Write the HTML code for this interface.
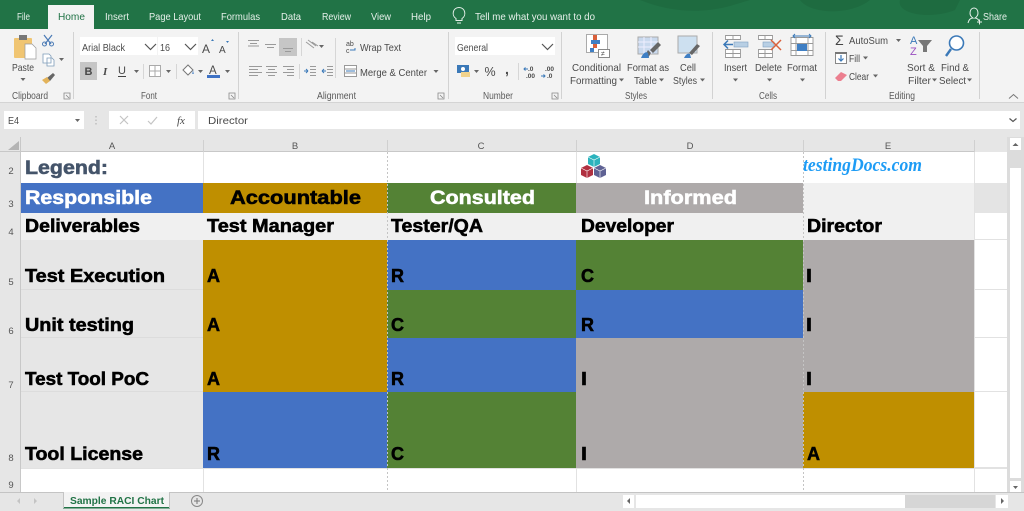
<!DOCTYPE html>
<html><head><meta charset="utf-8"><title>Sample RACI Chart</title>
<style>
html,body{margin:0;padding:0;background:#fff;width:1024px;height:511px;overflow:hidden}
svg{display:block;filter:blur(.35px)}
text{font-family:"Liberation Sans",sans-serif;font-size:10.5px;fill:#4a4a4a}
.t{fill:#e6f0ea;font-size:10.5px}
.g{fill:#5a5a5a;font-size:10px}
.b{font-weight:bold;font-size:18px;fill:#000;stroke:#000;stroke-width:.55px}
.h{font-size:19px}
.w{fill:#fff;stroke:#fff}
.r{fill:#555;font-size:9.5px;text-anchor:middle}
.ar{fill:#666}
</style></head><body>
<svg width="1024" height="511" viewBox="0 0 1024 511" xmlns="http://www.w3.org/2000/svg">
<defs><path id="a" d="M0 0h5l-2.500 3z" class="ar"/><path id="c" d="M0 0l5.500 5.500L11 0" fill="none" stroke="#555" stroke-width="1.200"/></defs>
<rect width="1024" height="511" fill="#fff"/>
<!-- title strip -->
<rect width="1024" height="29" fill="#217346"/>
<path d="M640 0c30 12 60 14 90 6l20-6zM800 0c10 14 50 16 70 0zM900 0c-4 14 30 20 55 10l5-10z" fill="#1e6b40"/>
<rect x="48" y="5" width="46" height="24" fill="#f3f3f3"/>
<text class="t" x="17" y="20" textLength="13" lengthAdjust="spacingAndGlyphs">File</text>
<text x="58" y="20" textLength="27" lengthAdjust="spacingAndGlyphs" style="fill:#217346">Home</text>
<text class="t" x="105" y="20" textLength="24" lengthAdjust="spacingAndGlyphs">Insert</text>
<text class="t" x="149" y="20" textLength="52" lengthAdjust="spacingAndGlyphs">Page Layout</text>
<text class="t" x="221" y="20" textLength="39" lengthAdjust="spacingAndGlyphs">Formulas</text>
<text class="t" x="281" y="20" textLength="20" lengthAdjust="spacingAndGlyphs">Data</text>
<text class="t" x="322" y="20" textLength="29" lengthAdjust="spacingAndGlyphs">Review</text>
<text class="t" x="371" y="20" textLength="20" lengthAdjust="spacingAndGlyphs">View</text>
<text class="t" x="411" y="20" textLength="20" lengthAdjust="spacingAndGlyphs">Help</text>
<path d="M456 20.500v-2c-5-3-3-11 3-11s8 8 3 11v2zM457 23h4" fill="none" stroke="#e6f0ea"/>
<text class="t" x="475" y="20" textLength="120" lengthAdjust="spacingAndGlyphs">Tell me what you want to do</text>
<path d="M968 23c1-4 3-5 5-5-5-3-3-10 1-10s6 7 1 10c2 0 4 2 4 3M977 22h5M979.500 19.500v5" fill="none" stroke="#e6f0ea"/>
<text class="t" x="983" y="20" textLength="24" lengthAdjust="spacingAndGlyphs">Share</text>

<!-- ribbon -->
<rect y="29" width="1024" height="73" fill="#f3f3f3"/>
<rect y="102" width="1024" height="35" fill="#e6e6e6"/>
<rect y="102" width="1024" height="1" fill="#d4d4d4"/>
<g fill="#d2d2d2"><rect x="73" y="32" width="1" height="67"/><rect x="238" y="32" width="1" height="67"/><rect x="448" y="32" width="1" height="67"/><rect x="561" y="32" width="1" height="67"/><rect x="712" y="32" width="1" height="67"/><rect x="825" y="32" width="1" height="67"/><rect x="979" y="32" width="1" height="67"/></g>
<text class="g" x="12" y="99" textLength="36" lengthAdjust="spacingAndGlyphs">Clipboard</text>
<text class="g" x="141" y="99" textLength="16" lengthAdjust="spacingAndGlyphs">Font</text>
<text class="g" x="317" y="99" textLength="39" lengthAdjust="spacingAndGlyphs">Alignment</text>
<text class="g" x="483" y="99" textLength="30" lengthAdjust="spacingAndGlyphs">Number</text>
<text class="g" x="625" y="99" textLength="22" lengthAdjust="spacingAndGlyphs">Styles</text>
<text class="g" x="759" y="99" textLength="18" lengthAdjust="spacingAndGlyphs">Cells</text>
<text class="g" x="889" y="99" textLength="26" lengthAdjust="spacingAndGlyphs">Editing</text>
<g fill="none" stroke="#888" stroke-width=".8"><path d="M64 93h6v6h-6zM66 95l3 3M438 93h6v6h-6zM440 95l3 3M229 93h6v6h-6zM231 95l3 3M552 93h6v6h-6zM554 95l3 3"/></g>

<!-- clipboard -->
<rect x="14" y="38" width="18" height="20" rx="1" fill="#f0c572"/>
<rect x="19" y="35" width="8" height="5" fill="#777"/>
<path d="M25 44h7l4 4v11H25z" fill="#fff" stroke="#999" stroke-width=".7"/>
<text x="12" y="71" textLength="22" lengthAdjust="spacingAndGlyphs">Paste</text>
<use href="#a" x="20.500" y="78"/>
<path d="M44 35l7 9M52 35l-7 9" stroke="#4a7ab5" fill="none" stroke-width="1.200"/><circle cx="44.500" cy="44" r="2" fill="none" stroke="#4a7ab5"/><circle cx="51.500" cy="44" r="2" fill="none" stroke="#4a7ab5"/>
<path d="M43 54h6l2 2v7h-8zM47 58h5l2 2v6h-7z" fill="#fff" stroke="#7e9cb9" stroke-width=".8"/>
<use href="#a" x="59" y="58"/>
<path d="M47 78l6-5 2 2-5 6z" fill="#666"/><path d="M42 80l5-3 3 4-4 3z" fill="#e3b35a"/>

<!-- font -->
<rect x="80" y="37" width="77" height="18" fill="#fff"/>
<rect x="158" y="37" width="40" height="18" fill="#fff"/>
<text x="82" y="51" textLength="43" lengthAdjust="spacingAndGlyphs">Arial Black</text>
<use href="#c" x="145" y="44"/>
<text x="160" y="51" textLength="10" lengthAdjust="spacingAndGlyphs">16</text>
<use href="#c" x="185" y="44"/>
<text x="202" y="53" style="font-size:12px">A</text><text x="219" y="53" style="font-size:10px">A</text>
<path d="M211 41l1.500-2 1.500 2zM226 41l1.500 2 1.500-2z" fill="#3b79b8"/>
<rect x="80" y="62" width="17" height="18" fill="#c6c6c6"/>
<text x="84.500" y="75" style="font-weight:bold;font-size:11px">B</text>
<text x="103" y="75" style="font-style:italic;font-size:11px;font-family:'Liberation Serif',serif;font-weight:bold">I</text>
<text x="118" y="74" style="font-size:11px">U</text><rect x="118" y="76" width="8" height="1" fill="#444"/>
<use href="#a" x="134" y="70"/>
<rect x="143" y="64" width="1" height="15" fill="#d6d6d6"/>
<path d="M149.500 65.500h11v11h-11zM155 65.500v11M149.500 71h11" fill="#fff" stroke="#aaa"/>
<use href="#a" x="166" y="70"/>
<rect x="176" y="64" width="1" height="15" fill="#d6d6d6"/>
<path d="M183 70l5-5 5 5-5 5z" fill="#fff" stroke="#777"/><path d="M193 70l1 4h-2z" fill="#6f9bd0"/>
<use href="#a" x="198" y="70"/>
<text x="209" y="74" style="font-size:11.500px">A</text><rect x="207" y="75" width="13" height="3" fill="#3f72c4"/>
<use href="#a" x="225" y="70"/>

<!-- alignment -->
<rect x="279" y="38" width="18" height="18" fill="#c6c6c6"/>
<g stroke="#9a9a9a" fill="none">
<path d="M248 40.500h11M250 43.500h7M248 46h11M265 44.500h11M267 47.500h7M283 48.500h10M285 51.500h6"/>
<path d="M249 66.500h13M249 69.500h9M249 72.500h13M249 75.500h9M266 66.500h11M268 69.500h7M266 72.500h11M268 75.500h7M283 66.500h11M287 69.500h7M283 72.500h11M287 75.500h7M310 66.500h6M310 69.500h6M310 72.500h6M310 75.500h6M327 66.500h6M327 69.500h6M327 72.500h6M327 75.500h6"/>
<path d="M306 42l8 6M308 40l8 6M312 42l6 4"/>
</g>
<use href="#a" x="319" y="45"/>
<path d="M304 71h4M308 71l-2-2M308 71l-2 2" stroke="#3b79b8" fill="none"/>
<path d="M326 71h-4M322 71l2-2M322 71l2 2" stroke="#3b79b8" fill="none"/>
<rect x="301" y="38" width="1" height="18" fill="#d6d6d6"/><rect x="299" y="64" width="1" height="15" fill="#d6d6d6"/>
<rect x="335" y="38" width="1" height="40" fill="#d6d6d6"/>
<text x="346" y="46" style="font-size:7px">ab</text><text x="346" y="53" style="font-size:7px">c</text><path d="M350 50h5v-2" fill="none" stroke="#3b79b8"/>
<text x="360" y="51" textLength="41" lengthAdjust="spacingAndGlyphs">Wrap Text</text>
<rect x="344.500" y="65.500" width="12" height="11" fill="#fff" stroke="#999"/>
<path d="M344 69h13M344 73h13" stroke="#999"/><path d="M346 71h9" stroke="#3b79b8"/>
<text x="360" y="76" textLength="67" lengthAdjust="spacingAndGlyphs">Merge &amp; Center</text>
<use href="#a" x="433.500" y="70"/>

<!-- number -->
<rect x="455" y="37" width="100" height="18" fill="#fff"/>
<text x="457" y="51" textLength="31" lengthAdjust="spacingAndGlyphs">General</text>
<use href="#c" x="542" y="44"/>
<rect x="457" y="65" width="12" height="8" fill="#3b79b8"/><circle cx="463" cy="69" r="2" fill="#fff"/><rect x="461" y="72" width="9" height="5" fill="#f0d28c"/>
<use href="#a" x="474" y="70"/>
<text x="484.500" y="76" style="font-size:12.500px">%</text>
<text x="505" y="74" style="font-size:14px;font-weight:bold">,</text>
<rect x="518" y="63" width="1" height="17" fill="#d6d6d6"/>
<text x="528" y="71" style="font-size:6.500px;font-weight:bold">.0</text><text x="526" y="78" style="font-size:6.500px;font-weight:bold">.00</text>
<path d="M524 69h4M525.500 67.500L524 69l1.500 1.500" stroke="#3b79b8" fill="none"/>
<text x="545" y="71" style="font-size:6.500px;font-weight:bold">.00</text><text x="547" y="78" style="font-size:6.500px;font-weight:bold">.0</text>
<path d="M541 76h4M543.500 74.500L545 76l-1.500 1.500" stroke="#3b79b8" fill="none"/>

<!-- styles -->
<rect x="586.500" y="34.500" width="21" height="18" fill="#fff" stroke="#aaa"/>
<rect x="593" y="35" width="4" height="5" fill="#d9603b"/><rect x="591" y="40" width="9" height="4" fill="#3f7fc4"/><rect x="593" y="44" width="4" height="4" fill="#d9603b"/><rect x="590" y="48" width="4" height="4" fill="#3f7fc4"/>
<rect x="598.500" y="49.500" width="11" height="8" fill="#fff" stroke="#888"/><text x="601" y="56" style="font-size:7px">≠</text>
<rect x="638" y="37" width="20" height="17" fill="#c9d9ee" stroke="#aaa"/><path d="M638 42h20M638 47h20M644 37v17M651 37v17" stroke="#eef" fill="none"/>
<path d="M644 57l4-7 3 3-3 5zM650 50l8-8 3 3-8 8z" fill="#666"/><path d="M641 58c2-5 5-7 7-5l1 5z" fill="#3f7fc4"/>
<rect x="678" y="36" width="19" height="17" fill="#cde0f0" stroke="#aaa"/><path d="M689 53l8-9 3 2-8 9z" fill="#666"/><path d="M684 58c2-4 4-5 6-4l1 4z" fill="#3f7fc4"/>
<text x="572" y="71" textLength="49" lengthAdjust="spacingAndGlyphs">Conditional</text>
<text x="570" y="84" textLength="47" lengthAdjust="spacingAndGlyphs">Formatting</text><use href="#a" x="619" y="78.500"/>
<text x="627" y="71" textLength="42" lengthAdjust="spacingAndGlyphs">Format as</text>
<text x="634" y="84" textLength="23" lengthAdjust="spacingAndGlyphs">Table</text><use href="#a" x="659" y="78.500"/>
<text x="680" y="71" textLength="16" lengthAdjust="spacingAndGlyphs">Cell</text>
<text x="673" y="84" textLength="24" lengthAdjust="spacingAndGlyphs">Styles</text><use href="#a" x="700" y="78.500"/>

<!-- cells -->
<g fill="#fff" stroke="#999" stroke-width=".9">
<path d="M725.500 35.500h15v4h-15zM733 35.500v4M725.500 49.500h15v8h-15zM733 49.500v8M725.500 53.500h15"/>
<path d="M758.500 35.500h14v4h-14zM765 35.500v4M758.500 49.500h14v8h-14zM765 49.500v8M758.500 53.500h14"/>
<path d="M791 37.500h22v18h-22zM796 37.500v18M808 37.500v18M791 43.500h22M791 50.500h22"/>
</g>
<rect x="734" y="42" width="14" height="5" fill="#b8cfe4" stroke="#7fa0c0" stroke-width=".6"/>
<path d="M724 44.500h9M728 40.500l-4 4 4 4" fill="none" stroke="#3b79b8" stroke-width="1.500"/>
<rect x="763" y="42" width="11" height="5" fill="#b8cfe4" stroke="#7fa0c0" stroke-width=".6"/>
<path d="M771 40l10 10M781 40l-10 10" stroke="#d9603b" stroke-width="1.500" fill="none"/>
<rect x="797" y="44" width="10" height="7" fill="#3f7fc4"/>
<path d="M793 36h18M795 34l-2 2 2 2M809 34l2 2-2 2" stroke="#3b79b8" fill="none"/>
<text x="724" y="71" textLength="23" lengthAdjust="spacingAndGlyphs">Insert</text>
<text x="755" y="71" textLength="27" lengthAdjust="spacingAndGlyphs">Delete</text>
<text x="787" y="71" textLength="30" lengthAdjust="spacingAndGlyphs">Format</text>
<use href="#a" x="733" y="78.500"/><use href="#a" x="767" y="78.500"/><use href="#a" x="800" y="78.500"/>

<!-- editing -->
<text x="835" y="45" style="font-size:14px;fill:#444">Σ</text>
<text x="849" y="44" textLength="39" lengthAdjust="spacingAndGlyphs">AutoSum</text><use href="#a" x="896" y="39"/>
<rect x="835.500" y="52.500" width="11" height="11" fill="#fff" stroke="#888"/><rect x="835" y="52" width="12" height="2" fill="#777"/>
<path d="M841 55v6M838.500 58.500l2.500 2.500 2.500-2.500" stroke="#3b79b8" fill="none" stroke-width="1.200"/>
<text x="849" y="62" textLength="11" lengthAdjust="spacingAndGlyphs">Fill</text><use href="#a" x="863" y="56.500"/>
<path d="M835 78l6-6 6 3-6 6h-3z" fill="#ec7f8f"/>
<text x="849" y="80" textLength="20" lengthAdjust="spacingAndGlyphs">Clear</text><use href="#a" x="873" y="74.500"/>
<text x="910" y="44" style="font-size:11px;fill:#3b79b8">A</text><text x="910" y="55" style="font-size:11px;fill:#9a4fc0">Z</text>
<path d="M918 40h14l-5 6v6h-4v-6z" fill="#777"/>
<text x="907" y="71" textLength="28" lengthAdjust="spacingAndGlyphs">Sort &amp;</text>
<text x="908" y="84" textLength="23" lengthAdjust="spacingAndGlyphs">Filter</text><use href="#a" x="932" y="78.500"/>
<circle cx="956.500" cy="43" r="7" fill="#fff" stroke="#3b79b8" stroke-width="1.600"/>
<path d="M951 49l-5 7" stroke="#3b79b8" stroke-width="2.400"/>
<text x="941" y="71" textLength="28" lengthAdjust="spacingAndGlyphs">Find &amp;</text>
<text x="939" y="84" textLength="27" lengthAdjust="spacingAndGlyphs">Select</text><use href="#a" x="967" y="78.500"/>
<path d="M1009 98.500l4.500-4 4.500 4" fill="none" stroke="#777"/>

<!-- formula bar -->
<rect x="4" y="111" width="80" height="18" fill="#fff"/>
<text x="8" y="124" textLength="11" lengthAdjust="spacingAndGlyphs">E4</text>
<use href="#a" x="75" y="119"/>
<path d="M96 116v10" stroke="#aaa" stroke-dasharray="1.500 2"/>
<rect x="109" y="111" width="86" height="18" fill="#fff"/>
<path d="M120 116l8 8M128 116l-8 8M148 121l3 3 6-7" fill="none" stroke="#c4c4c4" stroke-width="1.200"/>
<text x="177" y="124" style="font-family:'Liberation Serif',serif;font-style:italic;font-size:11px">fx</text>
<rect x="198" y="111" width="822" height="18" fill="#fff"/>
<text x="208" y="124" textLength="40" lengthAdjust="spacingAndGlyphs">Director</text>
<path d="M1009.500 118.500l3.500 3 3.500-3" fill="none" stroke="#555" stroke-width="1.200"/>

<!-- sheet bg -->
<rect y="137" width="1007" height="355" fill="#fff"/>
<rect y="137" width="1007" height="15" fill="#e6e6e6"/>
<rect x="0" y="137" width="21" height="355" fill="#e6e6e6"/>
<rect y="151" width="974" height="1" fill="#c8c8c8"/>
<rect x="20" y="137" width="1" height="355" fill="#c8c8c8"/>
<path d="M8 150L19 141v9z" fill="#b4b4b4"/>
<g fill="#d0d0d0"><rect x="203" y="140" width="1" height="12"/><rect x="387" y="140" width="1" height="12"/><rect x="576" y="140" width="1" height="12"/><rect x="803" y="140" width="1" height="12"/><rect x="974" y="140" width="1" height="12"/></g>
<text class="r" x="112" y="149">A</text><text class="r" x="295" y="149">B</text><text class="r" x="481" y="149">C</text><text class="r" x="690" y="149">D</text><text class="r" x="888" y="149">E</text>
<text class="r" x="11" y="174">2</text><text class="r" x="11" y="207">3</text><text class="r" x="11" y="235">4</text><text class="r" x="11" y="285">5</text><text class="r" x="11" y="334">6</text><text class="r" x="11" y="388">7</text><text class="r" x="11" y="461">8</text><text class="r" x="11" y="488">9</text>
<!-- cell fills -->
<rect x="974" y="183" width="33" height="30" fill="#e4e4e4"/>
<rect x="21" y="213" width="953" height="27" fill="#f0f0f0"/>
<rect x="803" y="183" width="171" height="30" fill="#f0f0f0"/>
<rect x="21" y="240" width="182" height="228" fill="#e6e6e6"/>
<rect x="21" y="183" width="182" height="30" fill="#4472c4"/>
<rect x="203" y="183" width="184" height="30" fill="#bf8f00"/>
<rect x="387" y="183" width="189" height="30" fill="#548235"/>
<rect x="576" y="183" width="227" height="30" fill="#aeaaaa"/>
<rect x="203" y="240" width="184" height="152" fill="#bf8f00"/>
<rect x="203" y="392" width="184" height="76" fill="#4472c4"/>
<rect x="387" y="240" width="189" height="50" fill="#4472c4"/>
<rect x="387" y="290" width="189" height="48" fill="#548235"/>
<rect x="387" y="338" width="189" height="54" fill="#4472c4"/>
<rect x="387" y="392" width="189" height="76" fill="#548235"/>
<rect x="576" y="240" width="227" height="50" fill="#548235"/>
<rect x="576" y="290" width="227" height="48" fill="#4472c4"/>
<rect x="576" y="338" width="227" height="130" fill="#aeaaaa"/>
<rect x="803" y="240" width="171" height="152" fill="#aeaaaa"/>
<rect x="803" y="392" width="171" height="76" fill="#bf8f00"/>
<!-- gridlines -->
<g fill="#e2e2e2">
<rect x="203" y="152" width="1" height="31"/><rect x="576" y="152" width="1" height="31"/><rect x="974" y="152" width="1" height="340"/>
<rect x="203" y="468" width="1" height="24"/><rect x="576" y="468" width="1" height="24"/>
<rect x="974" y="239" width="33" height="1"/><rect x="974" y="289" width="33" height="1"/><rect x="974" y="337" width="33" height="1"/><rect x="974" y="391" width="33" height="1"/><rect x="974" y="467" width="33" height="1"/>
<rect x="21" y="289" width="182" height="1" fill="#dcdcdc"/><rect x="21" y="337" width="182" height="1" fill="#dcdcdc"/><rect x="21" y="391" width="182" height="1" fill="#dcdcdc"/>
<rect x="21" y="468" width="986" height="1"/>
</g>
<path d="M387.500 152V492M803.500 152V492" stroke="#c4c4c4" stroke-dasharray="2 2" fill="none"/>

<!-- cell text -->
<text class="b h" x="25" y="174" textLength="83" lengthAdjust="spacingAndGlyphs" style="fill:#44546a;stroke:#44546a">Legend:</text>
<text class="b h w" x="25" y="204" textLength="127" lengthAdjust="spacingAndGlyphs">Responsible</text>
<text class="b h" x="230" y="204" textLength="131" lengthAdjust="spacingAndGlyphs">Accountable</text>
<text class="b h w" x="430" y="204" textLength="105" lengthAdjust="spacingAndGlyphs">Consulted</text>
<text class="b h w" x="644" y="204" textLength="93" lengthAdjust="spacingAndGlyphs">Informed</text>
<text class="b" x="25" y="232" textLength="115" lengthAdjust="spacingAndGlyphs">Deliverables</text>
<text class="b" x="207" y="232" textLength="127" lengthAdjust="spacingAndGlyphs">Test Manager</text>
<text class="b" x="391" y="232" textLength="92" lengthAdjust="spacingAndGlyphs">Tester/QA</text>
<text class="b" x="581" y="232" textLength="93" lengthAdjust="spacingAndGlyphs">Developer</text>
<text class="b" x="807" y="232" textLength="75" lengthAdjust="spacingAndGlyphs">Director</text>
<text class="b" x="25" y="282" textLength="140" lengthAdjust="spacingAndGlyphs">Test Execution</text>
<text class="b" x="207" y="282" textLength="13" lengthAdjust="spacingAndGlyphs">A</text><text class="b" x="391" y="282" textLength="13" lengthAdjust="spacingAndGlyphs">R</text><text class="b" x="581" y="282" textLength="13" lengthAdjust="spacingAndGlyphs">C</text><text class="b" x="806" y="282" textLength="6" lengthAdjust="spacingAndGlyphs">I</text>
<text class="b" x="25" y="331" textLength="109" lengthAdjust="spacingAndGlyphs">Unit testing</text>
<text class="b" x="207" y="331" textLength="13" lengthAdjust="spacingAndGlyphs">A</text><text class="b" x="391" y="331" textLength="13" lengthAdjust="spacingAndGlyphs">C</text><text class="b" x="581" y="331" textLength="13" lengthAdjust="spacingAndGlyphs">R</text><text class="b" x="806" y="331" textLength="6" lengthAdjust="spacingAndGlyphs">I</text>
<text class="b" x="25" y="385" textLength="124" lengthAdjust="spacingAndGlyphs">Test Tool PoC</text>
<text class="b" x="207" y="385" textLength="13" lengthAdjust="spacingAndGlyphs">A</text><text class="b" x="391" y="385" textLength="13" lengthAdjust="spacingAndGlyphs">R</text><text class="b" x="581" y="385" textLength="6" lengthAdjust="spacingAndGlyphs">I</text><text class="b" x="806" y="385" textLength="6" lengthAdjust="spacingAndGlyphs">I</text>
<text class="b" x="25" y="460" textLength="118" lengthAdjust="spacingAndGlyphs">Tool License</text>
<text class="b" x="207" y="460" textLength="13" lengthAdjust="spacingAndGlyphs">R</text><text class="b" x="391" y="460" textLength="13" lengthAdjust="spacingAndGlyphs">C</text><text class="b" x="581" y="460" textLength="6" lengthAdjust="spacingAndGlyphs">I</text><text class="b" x="807" y="460" textLength="13" lengthAdjust="spacingAndGlyphs">A</text>

<!-- logo -->
<path d="M594 154l6 3v7l-6 3-6-3v-7z" fill="#2bb3bd"/>
<path d="M587 165l6 3v7l-6 3-6-3v-7z" fill="#b03040"/>
<path d="M600 165l6 3v7l-6 3-6-3v-7z" fill="#5f6294"/>
<path d="M588 157l6 3 6-3M594 160v7M581 168l6 3 6-3M587 171v7M594 168l6 3 6-3M600 171v7" stroke="#fff" stroke-width=".6" fill="none"/>
<text x="803" y="171" textLength="119" lengthAdjust="spacingAndGlyphs" style="font-family:'Liberation Serif',serif;font-style:italic;font-weight:bold;font-size:19px;fill:#1e9cf5">testingDocs.com</text>

<!-- v scrollbar -->
<rect x="1007" y="137" width="17" height="355" fill="#dcdcdc"/>
<rect x="1010" y="138" width="11" height="12" fill="#fff"/>
<path d="M1012.500 146l3-3 3 3z" fill="#666"/>
<rect x="1010" y="168" width="11" height="310" fill="#fff"/>
<rect x="1010" y="481" width="11" height="11" fill="#fff"/>
<path d="M1013 486l2.500 3 2.500-3z" fill="#666"/>

<!-- tabs -->
<rect y="492" width="1024" height="19" fill="#e6e6e6"/>
<rect y="492" width="1024" height="1" fill="#c4c4c4"/>
<path d="M20 498l-3 3 3 3zM34 498l3 3-3 3z" fill="#c4c4c4"/>
<rect x="63" y="492" width="107" height="16" fill="#f3f3f3"/>
<rect x="63" y="507" width="107" height="1.500" fill="#217346"/>
<rect x="63" y="492" width="1" height="16" fill="#c4c4c4"/><rect x="169" y="492" width="1" height="16" fill="#c4c4c4"/>
<text x="70" y="504" textLength="94" lengthAdjust="spacingAndGlyphs" style="font-weight:bold;fill:#217346">Sample RACI Chart</text>
<circle cx="197" cy="501" r="5.500" fill="none" stroke="#888"/><path d="M194 501h6M197 498v6" stroke="#777"/>
<rect x="623" y="495" width="11" height="13" fill="#fff"/><path d="M630 498l-3 3 3 3z" fill="#666"/>
<rect x="636" y="495" width="269" height="13" fill="#fff"/>
<rect x="905" y="495" width="90" height="13" fill="#d6d6d6"/>
<rect x="996" y="495" width="12" height="13" fill="#fff"/><path d="M1001 498l3 3-3 3z" fill="#666"/>
</svg>
</body></html>
